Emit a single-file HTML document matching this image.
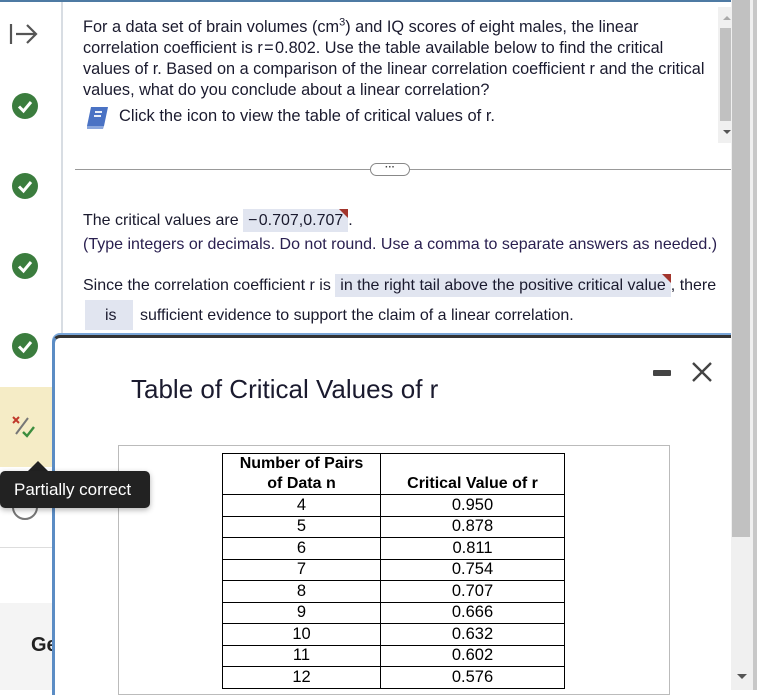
<!DOCTYPE html>
<html><head><meta charset="utf-8"><style>
*{margin:0;padding:0;box-sizing:border-box}
body{width:757px;height:690px;overflow:hidden;background:#fff;font-family:"Liberation Sans",Arial,sans-serif;color:#1a1a1a;position:relative}
.abs{position:absolute}
.chk{position:absolute;left:12px;width:26px;height:26px;border-radius:50%;background:#3b7d3e}
.chk svg{position:absolute;left:0;top:0}
.t{font-size:16px;line-height:21px;color:#1a1a2e}
.box{background:#e1e5f0;padding:3px 5px}
.tri{position:absolute;right:0;top:0;width:0;height:0;border-top:9px solid #a2352c;border-left:9px solid transparent}
table{border-collapse:collapse;position:absolute;left:222px;top:453px;width:343px;font-size:16.5px;color:#000}
td{border:1.5px solid #000;text-align:center;height:21.5px;line-height:19px;padding:0}
th{border:1.5px solid #000;font-weight:bold;font-size:16px;line-height:20px;height:40px}
</style></head><body>
<div class="abs" style="left:0;top:0;width:733px;height:2px;background:#4e7aa3"></div>
<div class="abs" style="left:61px;top:2px;width:2px;height:688px;background:#d8dde3"></div>
<svg class="abs" style="left:8px;top:20px" width="32" height="30"><path d="M3 4V24M8 14H28M19 5L28 14L19 23" stroke="#555" stroke-width="2.2" fill="none"/></svg>
<div class="chk" style="top:93px"><svg width="26" height="26"><path d="M7 13.5L11.5 18L19 9" stroke="#fff" stroke-width="3" fill="none"/></svg></div>
<div class="chk" style="top:173px"><svg width="26" height="26"><path d="M7 13.5L11.5 18L19 9" stroke="#fff" stroke-width="3" fill="none"/></svg></div>
<div class="chk" style="top:253px"><svg width="26" height="26"><path d="M7 13.5L11.5 18L19 9" stroke="#fff" stroke-width="3" fill="none"/></svg></div>
<div class="chk" style="top:333px"><svg width="26" height="26"><path d="M7 13.5L11.5 18L19 9" stroke="#fff" stroke-width="3" fill="none"/></svg></div>
<div class="abs" style="left:0;top:387px;width:55px;height:80px;background:#f5ecc6"></div>
<svg class="abs" style="left:10px;top:414px" width="26" height="26"><path d="M3 3L9 9M9 3L3 9" stroke="#c0392b" stroke-width="2"/><path d="M18 4L6 20" stroke="#777" stroke-width="2"/><path d="M13 18L17 22L24 13" stroke="#3b8d3e" stroke-width="2.4" fill="none"/></svg>
<div class="abs" style="left:12px;top:494px;width:26px;height:26px;border-radius:50%;border:2.5px solid #777"></div>
<div class="abs" style="left:0;top:547px;width:55px;height:1px;background:#ddd"></div>
<div class="abs" style="left:0;top:603px;width:55px;height:87px;background:#f4f4f4"></div>
<div class="abs" style="left:31px;top:634px;font-size:20px;font-weight:bold;color:#222">Ge</div>
<div class="abs t" style="left:83px;top:17px;width:632px;font-size:16.3px;white-space:nowrap">For a data set of brain volumes (cm<sup style="font-size:11px;line-height:0">3</sup>) and IQ scores of eight males, the linear<br>correlation coefficient is r&#8202;=&#8202;0.802. Use the table available below to find the critical<br>values of r. Based on a comparison of the linear correlation coefficient r and the critical<br>values, what do you conclude about a linear correlation?</div>
<svg class="abs" style="left:84px;top:104px" width="28" height="28"><path d="M7 3H24L20 22H3Z" fill="#4a72c4"/><path d="M3 22H20L19 25H3Z" fill="#8aa6dd"/><path d="M11 8H18M10 12H17" stroke="#fff" stroke-width="1.8"/></svg>
<div class="abs t" style="left:119px;top:106px;font-size:16.5px">Click the icon to view the table of critical values of r.</div>
<div class="abs" style="left:718px;top:7px;width:15px;height:136px;background:#f0f0f0"></div>
<div class="abs" style="left:720px;top:28px;width:11px;height:93px;background:#c1c1c1"></div>
<div class="abs" style="left:723px;top:16px;border-left:4px solid transparent;border-right:4px solid transparent;border-bottom:4px solid #aaa"></div>
<div class="abs" style="left:723px;top:130px;border-left:4px solid transparent;border-right:4px solid transparent;border-top:4px solid #555"></div>
<div class="abs" style="left:75px;top:169px;width:656px;height:1px;background:#999"></div>
<div class="abs" style="left:370px;top:163px;width:40px;height:13px;border:1px solid #888;border-radius:7px;background:#fff;font-size:10px;line-height:8px;text-align:center;color:#444;font-weight:bold">···</div>
<div class="abs t" style="left:83px;top:210px">The critical values are <span class="box" style="position:relative">&minus;&#8202;0.707,0.707<span class="tri"></span></span>.</div>
<div class="abs t" style="left:83px;top:234px;color:#2a2050">(Type integers or decimals. Do not round. Use a comma to separate answers as needed.)</div>
<div class="abs t" style="left:83px;top:275px;white-space:nowrap">Since the correlation coefficient r is <span class="box" style="position:relative">in the right tail above the positive critical value<span class="tri"></span></span>, there</div>
<div class="abs t" style="left:85px;top:300px;width:48px;height:30px;background:#e1e5f0"></div>
<div class="abs t" style="left:105px;top:305px">is</div>
<div class="abs t" style="left:140px;top:305px">sufficient evidence to support the claim of a linear correlation.</div>
<div class="abs" style="left:52px;top:335px;width:681px;height:360px;background:#fff;border-top:3px solid #333;border-left:3px solid #5b8cc4;border-top-left-radius:8px;box-shadow:0 -2px 0 #7aa6d8"></div>
<div class="abs" style="left:131px;top:374px;font-size:26px;color:#1a1a2e">Table of Critical Values of r</div>
<div class="abs" style="left:653px;top:370px;width:18px;height:6px;background:#444;border-radius:1px"></div>
<svg class="abs" style="left:691px;top:361px" width="22" height="22"><path d="M2 2L20 20M20 2L2 20" stroke="#444" stroke-width="2.4"/></svg>
<div class="abs" style="left:118px;top:445px;width:552px;height:250px;border:1px solid #bbb"></div>
<table>
<tr><th style="width:158px">Number of Pairs<br>of Data n</th><th style="vertical-align:bottom">Critical Value of r</th></tr>
<tr><td>4</td><td>0.950</td></tr>
<tr><td>5</td><td>0.878</td></tr>
<tr><td>6</td><td>0.811</td></tr>
<tr><td>7</td><td>0.754</td></tr>
<tr><td>8</td><td>0.707</td></tr>
<tr><td>9</td><td>0.666</td></tr>
<tr><td>10</td><td>0.632</td></tr>
<tr><td>11</td><td>0.602</td></tr>
<tr><td>12</td><td>0.576</td></tr>
</table>
<div class="abs" style="left:28px;top:461px;width:0;height:0;border-left:10px solid transparent;border-right:10px solid transparent;border-bottom:10px solid #222;z-index:5"></div>
<div class="abs" style="left:0;top:471px;width:150px;height:37px;background:#222;border-radius:5px;color:#fff;font-size:17px;line-height:37px;padding-left:14px;box-shadow:0 2px 6px rgba(0,0,0,.3);z-index:5;white-space:nowrap">Partially correct</div>
<div class="abs" style="left:731px;top:0;width:26px;height:690px;background:#f0f0f0"></div>
<div class="abs" style="left:732px;top:0;width:18px;height:537px;background:#c1c1c1"></div>
<div class="abs" style="left:753px;top:0;width:4px;height:690px;background:#c8c8c8"></div>
<div class="abs" style="left:737px;top:674px;border-left:5px solid transparent;border-right:5px solid transparent;border-top:5px solid #555"></div>
</body></html>
